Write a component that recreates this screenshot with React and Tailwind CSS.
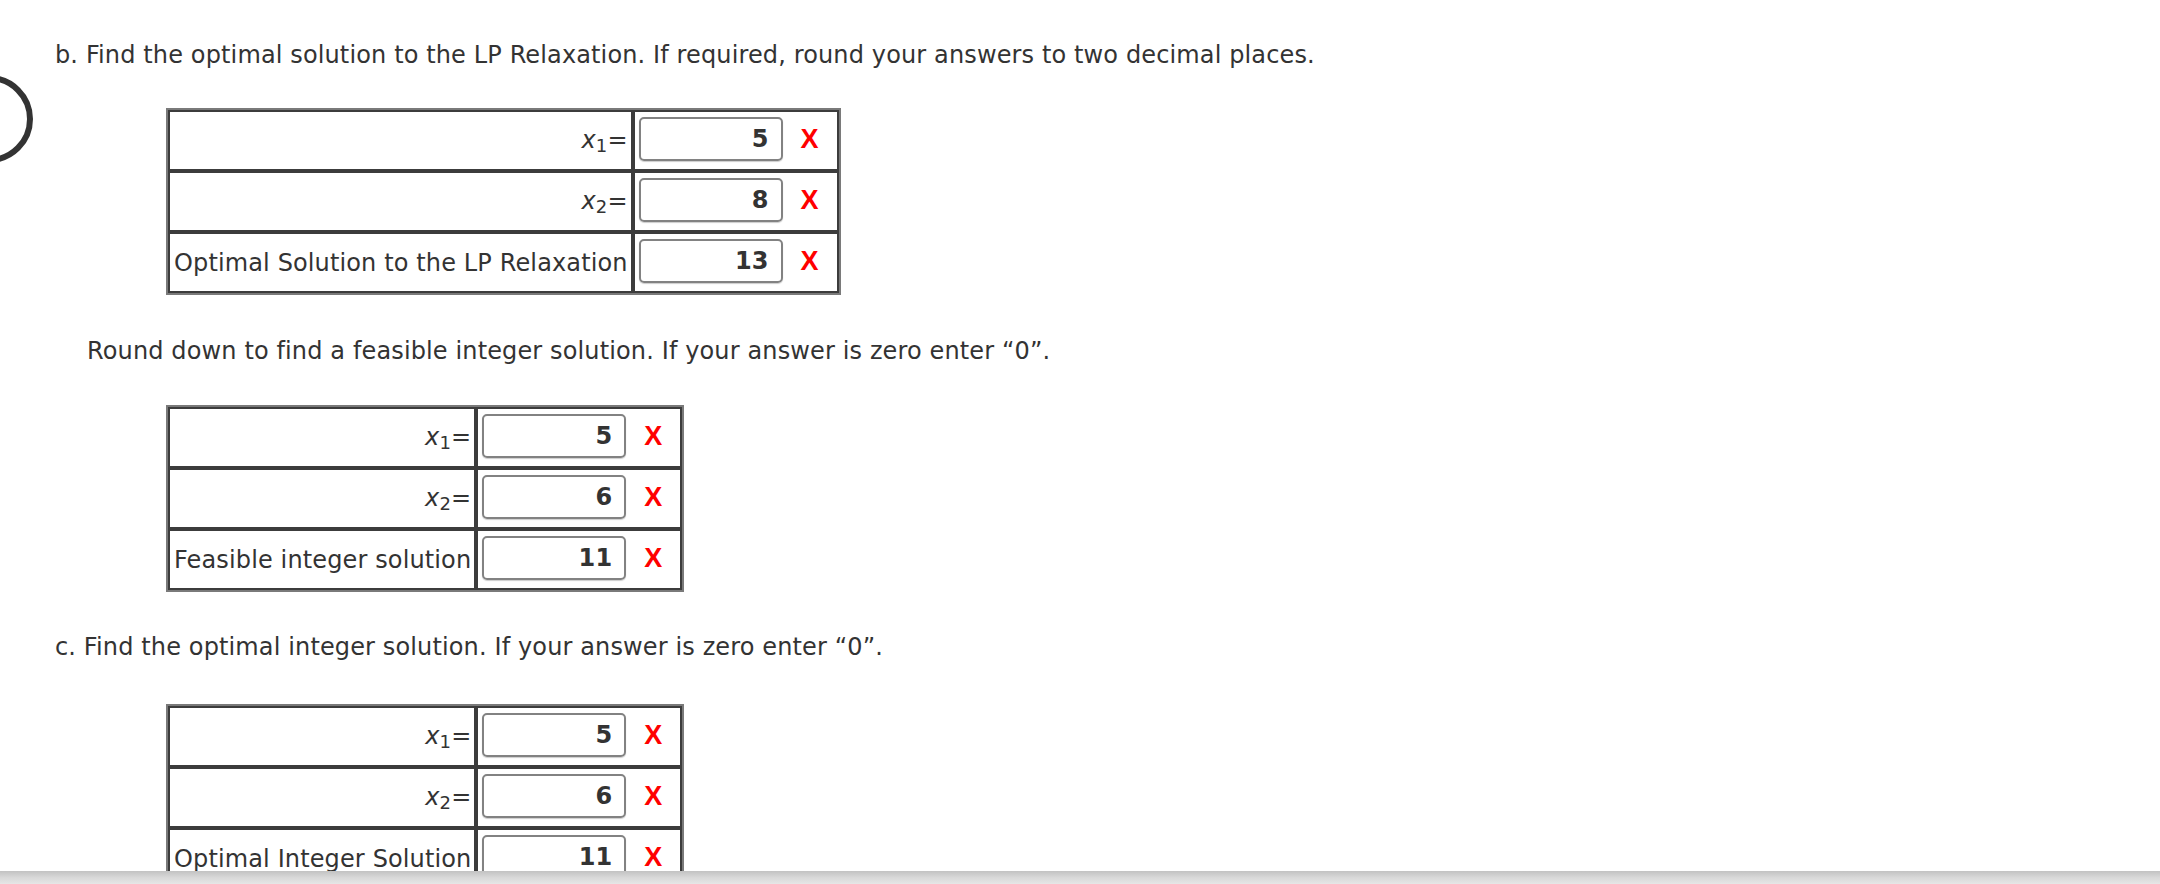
import React from "react";

const cellBorder = "border-2 border-[#3c3c3c]";

function XVar({ n }) {
  return (
    <span className="whitespace-nowrap">
      <span className="italic">x</span>
      <span className="text-[18px] relative top-[4px]">{n}</span>
      <span>=</span>
    </span>
  );
}

function Row({ label, value }) {
  return (
    <tr>
      <td className={`${cellBorder} pl-[4px] pr-[3px] text-right align-middle whitespace-nowrap`}>
        {label}
      </td>
      <td className={`${cellBorder} pl-[4px] pr-[17px] pt-[5px] pb-[8px] align-middle`}>
        <div className="flex items-center">
          <div className="w-[144px] h-[44px] border-2 border-[#828282] rounded-[5px] shadow-[0_1px_1px_rgba(0,0,0,0.2)] flex items-center justify-end pr-[12px] font-bold text-[24px] text-[#333]">
            {value}
          </div>
          <span className="ml-[17px] w-[20px] text-center text-[#ff0000] font-bold text-[27px] leading-none font-['Liberation_Sans',Arial,sans-serif]">
            X
          </span>
        </div>
      </td>
    </tr>
  );
}

function AnswerTable({ rows }) {
  return (
    <table className="border-separate border-spacing-0 border-2 border-[#7a7a7a] ml-[111px]">
      <tbody>
        {rows.map((r, i) => (
          <Row key={i} label={r.label} value={r.value} />
        ))}
      </tbody>
    </table>
  );
}

export default function App() {
  return (
    <div className="relative h-[884px] w-[2160px] overflow-hidden bg-white text-[#333] text-[24px] leading-[24px] tracking-[0.13px] font-['DejaVu_Sans',Verdana,sans-serif]">
      <div
        className="absolute left-[-55px] top-[75px] w-[88px] h-[88px] rounded-full border-[6px] border-[#333]"
        aria-hidden="true"
      />
      <div className="pl-[55px] pt-[43px]">
        <p>b. Find the optimal solution to the LP Relaxation. If required, round your answers to two decimal places.</p>
        <div className="mt-[41px]">
          <AnswerTable
            rows={[
              { label: <XVar n="1" />, value: "5" },
              { label: <XVar n="2" />, value: "8" },
              { label: "Optimal Solution to the LP Relaxation", value: "13" },
            ]}
          />
        </div>
        <p className="mt-[44px] ml-[32px]">Round down to find a feasible integer solution. If your answer is zero enter “0”.</p>
        <div className="mt-[42px]">
          <AnswerTable
            rows={[
              { label: <XVar n="1" />, value: "5" },
              { label: <XVar n="2" />, value: "6" },
              { label: "Feasible integer solution", value: "11" },
            ]}
          />
        </div>
        <p className="mt-[43px]">c. Find the optimal integer solution. If your answer is zero enter “0”.</p>
        <div className="mt-[45px]">
          <AnswerTable
            rows={[
              { label: <XVar n="1" />, value: "5" },
              { label: <XVar n="2" />, value: "6" },
              { label: "Optimal Integer Solution", value: "11" },
            ]}
          />
        </div>
      </div>
      <div className="absolute left-0 right-0 bottom-0 h-[13px] bg-gradient-to-b from-[#c2c2c2] via-[#d8d8d8] to-[#e6e6e6]" />
    </div>
  );
}
